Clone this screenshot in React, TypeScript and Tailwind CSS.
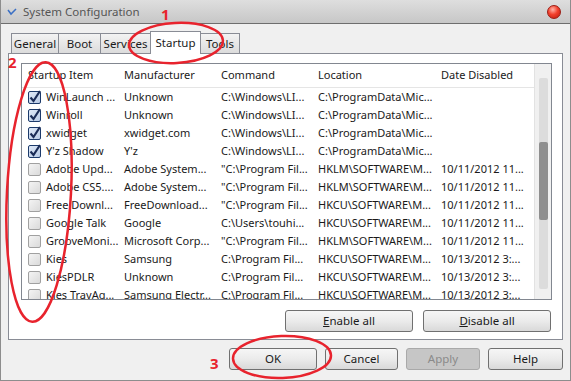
import { Fragment } from "react";

interface StartupRow {
  item: string;
  maker: string;
  command: string;
  location: string;
  date: string;
  on: boolean;
}

const rows: StartupRow[] = [
  { item: "WinLaunch ...", maker: "Unknown", command: "C:\\Windows\\LI...", location: "C:\\ProgramData\\Mic...", date: "", on: true },
  { item: "Winroll", maker: "Unknown", command: "C:\\Windows\\LI...", location: "C:\\ProgramData\\Mic...", date: "", on: true },
  { item: "xwidget", maker: "xwidget.com", command: "C:\\Windows\\LI...", location: "C:\\ProgramData\\Mic...", date: "", on: true },
  { item: "Y'z Shadow", maker: "Y'z", command: "C:\\Windows\\LI...", location: "C:\\ProgramData\\Mic...", date: "", on: true },
  { item: "Adobe Upd...", maker: "Adobe System...", command: "\"C:\\Program Fil...", location: "HKLM\\SOFTWARE\\M...", date: "10/11/2012 11...", on: false },
  { item: "Adobe CS5....", maker: "Adobe System...", command: "\"C:\\Program Fil...", location: "HKLM\\SOFTWARE\\M...", date: "10/11/2012 11...", on: false },
  { item: "Free Downl...", maker: "FreeDownload...", command: "\"C:\\Program Fil...", location: "HKCU\\SOFTWARE\\M...", date: "10/11/2012 11...", on: false },
  { item: "Google Talk", maker: "Google", command: "C:\\Users\\touhi...", location: "HKCU\\SOFTWARE\\M...", date: "10/11/2012 11...", on: false },
  { item: "GrooveMoni...", maker: "Microsoft Corp...", command: "\"C:\\Program Fil...", location: "HKLM\\SOFTWARE\\M...", date: "10/11/2012 11...", on: false },
  { item: "Kies", maker: "Samsung", command: "C:\\Program Fil...", location: "HKCU\\SOFTWARE\\M...", date: "10/13/2012 3:...", on: false },
  { item: "KiesPDLR", maker: "Unknown", command: "C:\\Program Fil...", location: "HKCU\\SOFTWARE\\M...", date: "10/13/2012 3:...", on: false },
  { item: "Kies TrayAg...", maker: "Samsung Electr...", command: "C:\\Program Fil...", location: "HKCU\\SOFTWARE\\M...", date: "10/13/2012 3:...", on: false },
];

const tabs = [
  { name: "General", w: "w-[48px]" },
  { name: "Boot", w: "w-[43px]" },
  { name: "Services", w: "w-[51px]" },
  { name: "Startup", w: "w-[51px]" },
  { name: "Tools", w: "w-[40px]" },
];

// column grid shared by header and rows
const cols = "grid grid-cols-[96px_97px_97px_123px_1fr]";

function CheckBox({ on }: { on: boolean }) {
  return (
    <span
      className={`relative w-[13px] h-[13px] shrink-0 rounded-[2px] border ${
        on
          ? "border-[#1c3a6b] bg-gradient-to-br from-[#dfe9f7] to-[#b9cbe6]"
          : "border-[#a0a0a0] bg-gradient-to-br from-[#f4f4f4] to-[#dadada]"
      }`}
    >
      {on && (
        <svg className="absolute -left-[1px] -top-[3px]" width="14" height="15" viewBox="0 0 14 15">
          <path d="M2.5 8.5 L5.5 12 L12 2" fill="none" stroke="#1b2c57" strokeWidth="2.2" />
        </svg>
      )}
    </span>
  );
}

function Btn({ label, u, disabled, w }: { label: string; u?: string; disabled?: boolean; w: string }) {
  return (
    <div
      className={`${w} h-[22px] flex items-center justify-center rounded-[3px] border text-[11.5px] ${
        disabled
          ? "border-[#a9a9a9] bg-[#c6c6c6] text-[#8a8a8a]"
          : "border-[#707070] bg-gradient-to-b from-[#f6f6f6] via-[#ebebeb] to-[#d9d9d9] text-[#1a1a1a]"
      }`}
    >
      {u ? (
        <span>
          <span className="underline">{u}</span>
          {label}
        </span>
      ) : (
        label
      )}
    </div>
  );
}

export default function App() {
  return (
    <div
      className="relative w-[571px] h-[381px] overflow-hidden bg-[#f0f0f0] border-x border-b border-[#8d8d8d] text-[#1a1a1a]"
      style={{ fontFamily: '"Noto Sans", "Open Sans", sans-serif' }}
    >
      {/* title bar */}
      <div className="h-[24px] flex items-center bg-gradient-to-b from-[#dedede] to-[#c7c7c7] border-b border-[#6e6e6e] px-[6px]">
        <svg width="10" height="8" viewBox="0 0 10 8">
          <path d="M1 2 L4 6 L9 1" fill="none" stroke="#3a6fc4" strokeWidth="1.5" />
        </svg>
        <span className="ml-[6px] text-[11.5px] text-[#555555]">System Configuration</span>
        <span className="ml-auto mr-[3px] w-[14px] h-[14px] rounded-full border border-[#9b1b12] bg-[radial-gradient(circle_at_40%_30%,#ffb3a8_0%,#f2402c_45%,#b81a0e_100%)]" />
      </div>

      <div className="px-[7px] pt-[7px]">
        {/* tabs */}
        <div className="flex items-end h-[22px] pl-[3px]">
          {tabs.map((t) =>
            t.name === "Startup" ? (
              <div
                key={t.name}
                className={`${t.w} relative z-10 h-[23px] -mb-[1px] -mr-[1px] flex items-center justify-center bg-white border border-b-0 border-[#898c95] text-[11.5px]`}
              >
                {t.name}
              </div>
            ) : (
              <div
                key={t.name}
                className={`${t.w} h-[20px] -mr-[1px] flex items-center justify-center bg-gradient-to-b from-[#f3f3f3] to-[#dcdcdc] border border-b-0 border-[#898c95] text-[11.5px]`}
              >
                {t.name}
              </div>
            )
          )}
        </div>

        {/* tab panel */}
        <div className="h-[287px] bg-white border border-[#898c95] pt-[9px] pl-[12px] pr-[10px]">
          <div className="relative h-[237px] border border-[#828790] overflow-hidden flex">
            <div className="flex-1">
              <div className={`${cols} h-[24px] items-center border-b border-[#e5e5e5] text-[11px]`}>
                {["Startup Item", "Manufacturer", "Command", "Location", "Date Disabled"].map((h) => (
                  <span key={h} className="pl-[6px] whitespace-nowrap">
                    {h}
                  </span>
                ))}
              </div>
              {rows.map((r) => (
                <div key={r.item} className={`${cols} h-[18px] items-center text-[11px] whitespace-nowrap`}>
                  <span className="pl-[6px] flex items-center gap-[5px]">
                    <CheckBox on={r.on} />
                    {r.item}
                  </span>
                  <span className="pl-[6px]">{r.maker}</span>
                  <span className="pl-[6px]">{r.command}</span>
                  <span className="pl-[6px]">{r.location}</span>
                  <span className="pl-[6px]">{r.date}</span>
                </div>
              ))}
            </div>
            {/* scrollbar */}
            <div className="w-[17px] shrink-0 bg-[#f0f0f0] border-l border-[#e2e2e2] flex justify-center pt-[14px] pb-[10px]">
              <div className="w-[9px] flex flex-col rounded-[2px] bg-[#dcdcdc]">
                <div className="h-[64px]" />
                <div className="h-[78px] rounded-[2px] bg-[#8f8f8f]" />
              </div>
            </div>
          </div>
          <div className="flex justify-end gap-[10px] mt-[10px] pr-[1px]">
            <Fragment>
              <Btn w="w-[128px]" u="E" label="nable all" />
              <Btn w="w-[128px]" u="D" label="isable all" />
            </Fragment>
          </div>
        </div>

        {/* dialog buttons */}
        <div className="flex justify-end gap-[8px] mt-[8px]">
          <Btn w="w-[88px]" label="OK" />
          <Btn w="w-[73px]" label="Cancel" />
          <Btn w="w-[74px]" label="Apply" disabled />
          <Btn w="w-[75px]" label="Help" />
        </div>
      </div>

      {/* red annotations drawn over the screenshot */}
      <svg className="absolute inset-0 pointer-events-none" width="571" height="381">
        <g fill="none" stroke="#e8232d" strokeWidth="2.5">
          <ellipse cx="175" cy="43" rx="47" ry="20" transform="rotate(-3 175 43)" />
          <ellipse cx="38" cy="192" rx="32" ry="130" transform="rotate(3 38 192)" />
          <ellipse cx="281" cy="357" rx="49" ry="21" transform="rotate(-2 281 357)" />
        </g>
      </svg>
      <span className="absolute left-[160px] top-[3px] text-[15px] font-bold text-[#e8232d]">1</span>
      <span className="absolute left-[7px] top-[51px] text-[15px] font-bold text-[#e8232d]">2</span>
      <span className="absolute left-[209px] top-[352px] text-[15px] font-bold text-[#e8232d]">3</span>
    </div>
  );
}
